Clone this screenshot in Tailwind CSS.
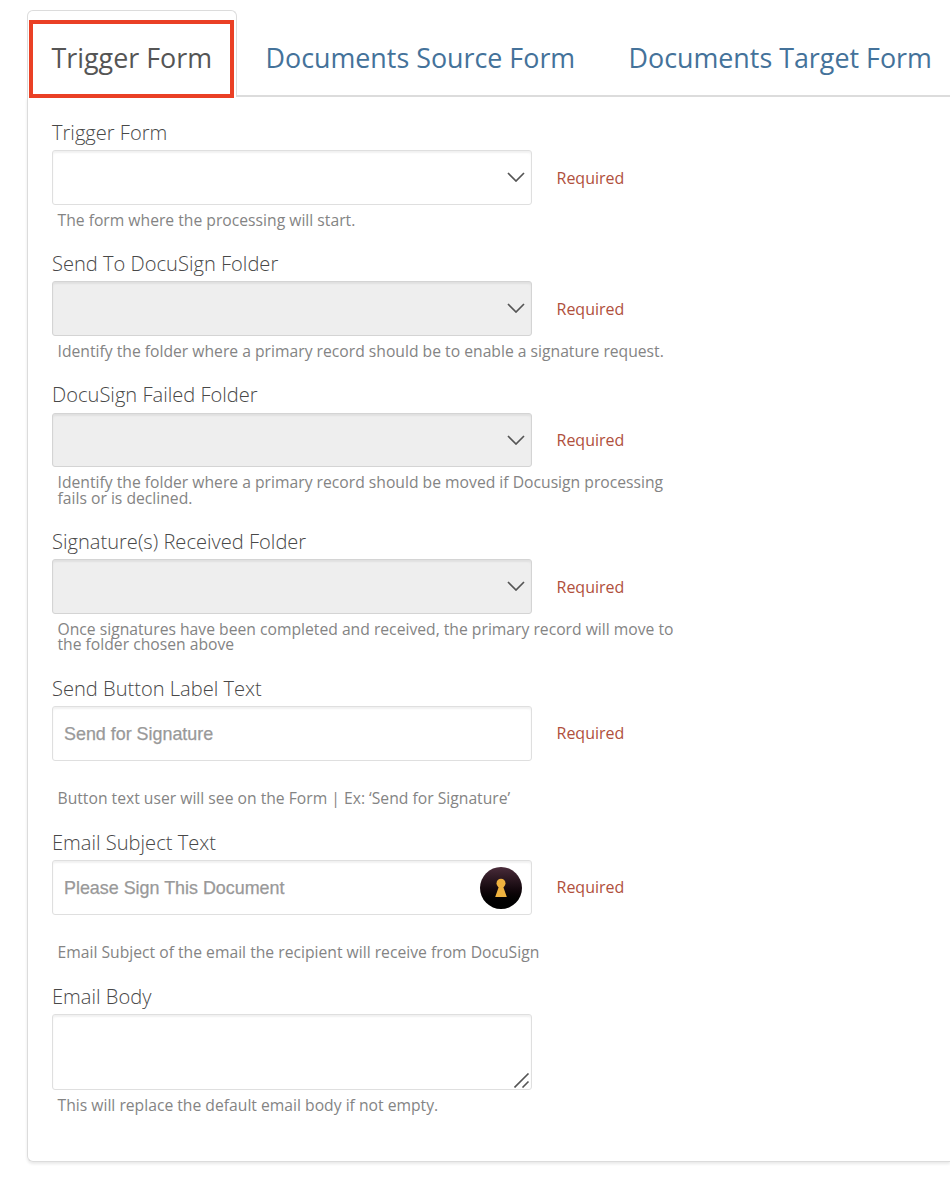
<!DOCTYPE html>
<html lang="en">
<head>
    <meta charset="UTF-8">
    <meta name="viewport" content="width=device-width, initial-scale=1.0">
    <title>DocuSign Settings - Trigger Form</title>
    <script src="https://cdn.jsdelivr.net/npm/@tailwindcss/browser@4"></script>
</head>
<body class="bg-white font-['Open_Sans',sans-serif] text-[#484848]">
<div class="pl-[27px] pt-[10px] pb-[10px] w-full overflow-hidden">
    <!-- Tabs -->
    <nav class="flex h-[87px] border-b-2 border-[#dcdcdc] text-[26.85px] leading-[36px] whitespace-nowrap">
        <a href="#" class="relative w-[210px] h-[87px] shrink-0 pl-[23.5px] pt-[29px] bg-white border border-b-0 border-[#dcdcdc] rounded-t-[6px] text-[#555]">
            Trigger Form
            <span class="absolute left-[1px] top-[9px] w-[205px] h-[78px] border-4 border-[#ea4025]"></span>
        </a>
        <a href="#" class="w-[363px] shrink-0 pl-[28.5px] pt-[30px] text-[#44729a]">Documents Source Form</a>
        <a href="#" class="pl-[28.5px] pt-[30px] text-[#44729a]">Documents Target Form</a>
    </nav>

    <!-- Panel -->
    <form class="h-[1065px] pl-[24px] pt-[19px] border border-t-0 border-r-0 border-[#dcdcdc] rounded-bl-[6px] shadow-[0_2px_3px_rgba(0,0,0,0.09)]">
        <div class="w-[640px]">
            <label class="block h-[34px] text-[20.1px] leading-[34px] font-light">Trigger Form</label>
            <div class="flex items-center gap-[24.5px]">
                <div class="flex items-center justify-end w-[480px] h-[55px] pr-[6px] pb-[1px] bg-white border border-[#dfdfdf] rounded-[3px] shadow-[inset_0_2px_2px_rgba(0,0,0,0.06)]">
                    <svg class="w-[18px] h-[10px]" viewBox="0 0 18 10" fill="none" stroke="#555" stroke-width="1.7"><path d="M1 1l8 8 8-8"/></svg>
                </div>
                <span class="text-[16px] leading-[20px] text-[#b0503c]">Required</span>
            </div>
            <p class="h-[42px] pl-[5.5px] pt-[8px] text-[15.7px] leading-[15.5px] text-[#848484]">The form where the processing will start.</p>
        </div>

        <div class="w-[640px]">
            <label class="block h-[34px] text-[20.1px] leading-[34px] font-light">Send To DocuSign Folder</label>
            <div class="flex items-center gap-[24.5px]">
                <div class="flex items-center justify-end w-[480px] h-[55px] pr-[6px] pb-[1px] bg-[#eeeeee] border border-[#d4d4d4] rounded-[3px] shadow-[inset_0_2px_2px_rgba(0,0,0,0.06)]">
                    <svg class="w-[18px] h-[10px]" viewBox="0 0 18 10" fill="none" stroke="#555" stroke-width="1.7"><path d="M1 1l8 8 8-8"/></svg>
                </div>
                <span class="text-[16px] leading-[20px] text-[#b0503c]">Required</span>
            </div>
            <p class="h-[42px] pl-[5.5px] pt-[8px] text-[15.7px] leading-[15.5px] text-[#848484] whitespace-nowrap">Identify the folder where a primary record should be to enable a signature request.</p>
        </div>

        <div class="w-[640px]">
            <label class="block h-[35px] text-[20.1px] leading-[34px] font-light">DocuSign Failed Folder</label>
            <div class="flex items-center gap-[24.5px]">
                <div class="flex items-center justify-end w-[480px] h-[54px] pr-[6px] bg-[#eeeeee] border border-[#d4d4d4] rounded-[3px] shadow-[inset_0_2px_2px_rgba(0,0,0,0.06)]">
                    <svg class="w-[18px] h-[10px]" viewBox="0 0 18 10" fill="none" stroke="#555" stroke-width="1.7"><path d="M1 1l8 8 8-8"/></svg>
                </div>
                <span class="text-[16px] leading-[20px] text-[#b0503c]">Required</span>
            </div>
            <p class="h-[58px] pl-[5.5px] pt-[7px] text-[15.7px] leading-[16px] text-[#848484] whitespace-nowrap">Identify the folder where a primary record should be moved if Docusign processing<br>fails or is declined.</p>
        </div>

        <div class="w-[640px]">
            <label class="block h-[34px] text-[20.1px] leading-[34px] font-light">Signature(s) Received Folder</label>
            <div class="flex items-center gap-[24.5px]">
                <div class="flex items-center justify-end w-[480px] h-[55px] pr-[6px] pb-[1px] bg-[#eeeeee] border border-[#d4d4d4] rounded-[3px] shadow-[inset_0_2px_2px_rgba(0,0,0,0.06)]">
                    <svg class="w-[18px] h-[10px]" viewBox="0 0 18 10" fill="none" stroke="#555" stroke-width="1.7"><path d="M1 1l8 8 8-8"/></svg>
                </div>
                <span class="text-[16px] leading-[20px] text-[#b0503c]">Required</span>
            </div>
            <p class="h-[58px] pl-[5.5px] pt-[8px] text-[15.7px] leading-[15px] text-[#848484] whitespace-nowrap">Once signatures have been completed and received, the primary record will move to<br>the folder chosen above</p>
        </div>

        <div class="w-[640px]">
            <label class="block h-[34px] text-[20.1px] leading-[34px] font-light">Send Button Label Text</label>
            <div class="flex items-center gap-[24.5px]">
                <input type="text" placeholder="Send for Signature" class="w-[480px] h-[55px] px-[11px] pt-[2px] bg-white border border-[#dfdfdf] rounded-[3px] shadow-[inset_0_2px_2px_rgba(0,0,0,0.06)] font-['Liberation_Sans',sans-serif] text-[17.9px] placeholder:text-[#999] [-webkit-text-stroke:0.25px_#999]">
                <span class="pb-[2px] text-[16px] leading-[20px] text-[#b0503c]">Required</span>
            </div>
            <p class="h-[65px] pl-[5.5px] pt-[29px] text-[15.7px] leading-[16px] text-[#848484]">Button text user will see on the Form | Ex: ‘Send for Signature’</p>
        </div>

        <div class="w-[640px]">
            <label class="block h-[34px] text-[20.1px] leading-[34px] font-light">Email Subject Text</label>
            <div class="flex items-center gap-[24.5px]">
                <div class="relative">
                    <input type="text" placeholder="Please Sign This Document" class="block w-[480px] h-[55px] px-[11px] pt-[2px] bg-white border border-[#dfdfdf] rounded-[3px] shadow-[inset_0_2px_2px_rgba(0,0,0,0.06)] font-['Liberation_Sans',sans-serif] text-[17.9px] placeholder:text-[#999] [-webkit-text-stroke:0.25px_#999]">
                    <!-- Password manager badge -->
                    <span class="absolute right-[10px] top-[7px] w-[42px] h-[42px] rounded-full bg-linear-to-b from-[#4a2c3a] to-black">
                        <svg class="w-[42px] h-[42px]" viewBox="0 0 42 42" fill="#efb23f"><circle cx="21" cy="16.3" r="4.5"/><path d="M19 19h4l1 3 2.8 8H15.2l2.8-8z"/></svg>
                    </span>
                </div>
                <span class="pb-[2px] text-[16px] leading-[20px] text-[#b0503c]">Required</span>
            </div>
            <p class="h-[65px] pl-[5.5px] pt-[29px] text-[15.7px] leading-[16px] text-[#848484]">Email Subject of the email the recipient will receive from DocuSign</p>
        </div>

        <div class="w-[640px]">
            <label class="block h-[34px] text-[20.1px] leading-[34px] font-light">Email Body</label>
            <div class="relative w-[480px]">
                <textarea class="block w-[480px] h-[76px] resize-none bg-white border border-[#dfdfdf] rounded-[3px] shadow-[inset_0_2px_2px_rgba(0,0,0,0.06)]"></textarea>
                <svg class="absolute right-[2px] bottom-[2px] w-[16px] h-[15px]" viewBox="0 0 16 15" fill="none" stroke="#555" stroke-width="1.6"><path d="M.5 14.5L14.5 .5M8.5 14.5l6-6"/></svg>
            </div>
            <p class="pl-[5.5px] pt-[8px] text-[15.7px] leading-[15.5px] text-[#848484]">This will replace the default email body if not empty.</p>
        </div>
    </form>
</div>
</body>
</html>
